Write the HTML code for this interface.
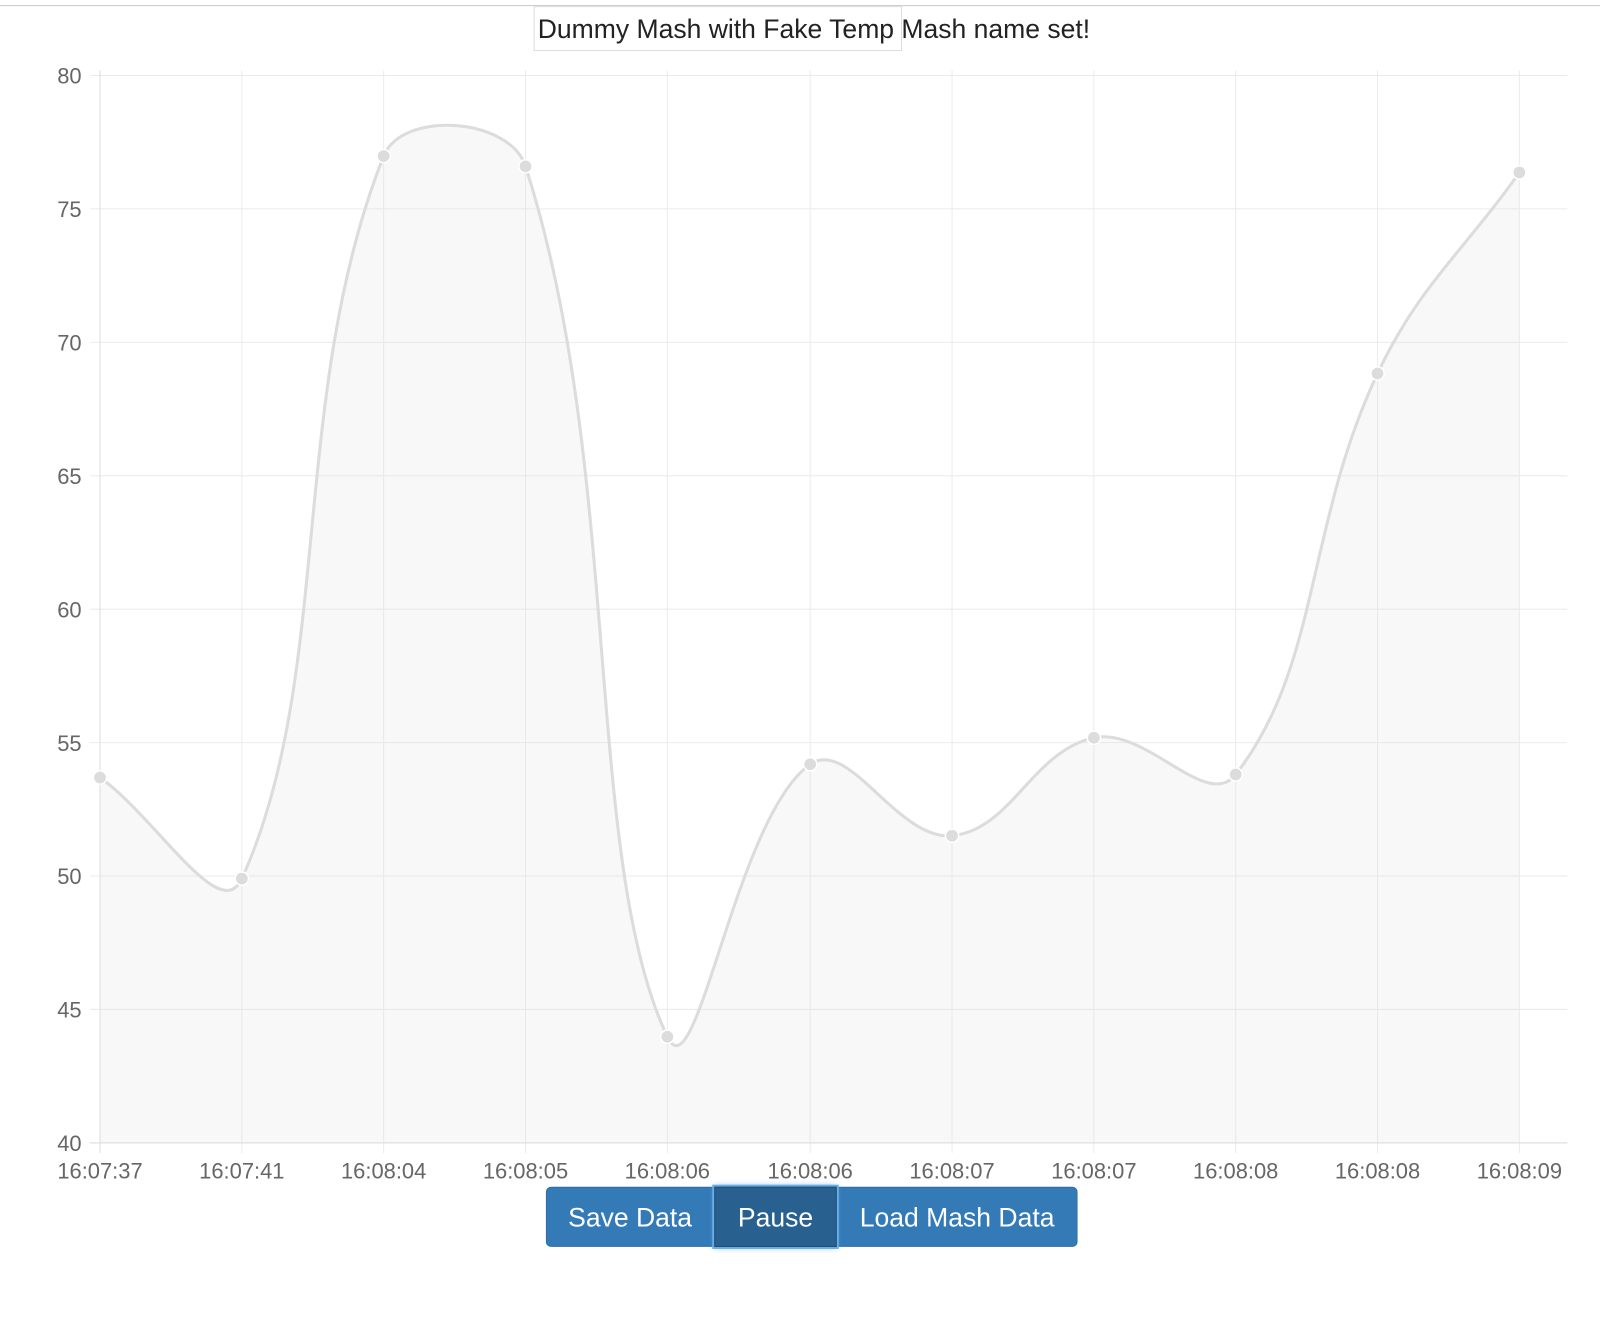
<!DOCTYPE html>
<html><head><meta charset="utf-8"><style>
html,body{margin:0;padding:0;background:#fff;width:1600px;height:1330px;overflow:hidden;font-family:"Liberation Sans",Arial,sans-serif}
#wrap{position:absolute;left:0;top:0;width:1568px;height:1304px;transform:scale(1.0204);transform-origin:0 0}
#topline{position:absolute;left:0;top:0;width:1568px;height:5px;background:#fff;border-bottom:1px solid #c8c8c8}
#title{position:absolute;left:523px;top:6px;height:44px;line-height:44px;font-size:26px;color:#222;white-space:nowrap}
#title .box{position:absolute;left:0;top:0;width:359px;height:42px;border:1px solid #ddd}
#title span.t{position:relative;padding-left:4px}
svg{position:absolute;left:0;top:0}
.btns{position:absolute;left:535px;top:1163px;height:59px;display:flex}
.btn{height:59px;line-height:59px;color:#fff;font-size:26px;background:#337ab7;border:1px solid #2e6da4;box-sizing:border-box;text-align:center}
.b1{width:165px;border-radius:5px 0 0 5px}
.b2{width:120px;background:#286090;border-color:#204d74;box-shadow:0 0 0 2px #66afe9,0 0 6px #66afe9;position:relative;z-index:2}
.b3{width:236px;border-radius:0 5px 5px 0}
</style></head><body>
<div id="wrap">
<div id="topline"></div>
<div id="title"><div class="box"></div><span class="t">Dummy Mash with Fake Temp Mash name set!</span></div>
<svg id="c" width="1568" height="1304" xmlns="http://www.w3.org/2000/svg"></svg>
<div class="btns"><div class="btn b1">Save Data</div><div class="btn b2">Pause</div><div class="btn b3">Load Mash Data</div></div>
</div>
<script>
(function(){
var xs=[98,237,376,515,654,794,933,1072,1211,1350,1489];
var ys=[762,861,153,163,1016,749,819,723,759,366,169];
var labels=["16:07:37","16:07:41","16:08:04","16:08:05","16:08:06","16:08:06","16:08:07","16:08:07","16:08:08","16:08:08","16:08:09"];
var s='';
var yTop=74,yBot=1120;
for(var i=0;i<=8;i++){var y=yTop+i*(yBot-yTop)/8;s+='<line x1="88" x2="1536" y1="'+y+'" y2="'+y+'" stroke="#ebebeb" stroke-width="1"/>';
s+='<text x="80" y="'+(y+8)+'" text-anchor="end" font-size="21.5" fill="#666" font-family="Liberation Sans,sans-serif">'+(80-i*5)+'</text>';}
for(var i=0;i<xs.length;i++){s+='<line x1="'+xs[i]+'" x2="'+xs[i]+'" y1="'+(yTop-5)+'" y2="1130" stroke="'+(i==0?'#dcdcdc':'#ebebeb')+'" stroke-width="1"/>';
s+='<text x="'+xs[i]+'" y="1155" text-anchor="middle" font-size="21.5" fill="#666" font-family="Liberation Sans,sans-serif">'+labels[i]+'</text>';}
s+='<line x1="88" x2="1536" y1="1120" y2="1120" stroke="#dcdcdc"/>';
var t=0.4,cp=[];
for(var i=0;i<xs.length;i++){
 var p0=i>0?[xs[i-1],ys[i-1]]:[xs[i],ys[i]],p1=[xs[i],ys[i]],p2=i<xs.length-1?[xs[i+1],ys[i+1]]:[xs[i],ys[i]];
 var d01=Math.hypot(p1[0]-p0[0],p1[1]-p0[1]),d12=Math.hypot(p2[0]-p1[0],p2[1]-p1[1]);
 var fa=d01+d12?t*d01/(d01+d12):0,fb=d01+d12?t*d12/(d01+d12):0;
 cp.push({ix:p1[0]-fa*(p2[0]-p0[0]),iy:p1[1]-fa*(p2[1]-p0[1]),ox:p1[0]+fb*(p2[0]-p0[0]),oy:p1[1]+fb*(p2[1]-p0[1])});
}
var d='M'+xs[0]+','+ys[0];
for(var i=1;i<xs.length;i++){d+=' C'+cp[i-1].ox+','+cp[i-1].oy+' '+cp[i].ix+','+cp[i].iy+' '+xs[i]+','+ys[i];}
s+='<path d="'+d+' L1489,1120 L98,1120 Z" fill="rgba(220,220,220,0.2)"/>';
s+='<path d="'+d+'" fill="none" stroke="#dcdcdc" stroke-width="3"/>';
for(var i=0;i<xs.length;i++){s+='<circle cx="'+xs[i]+'" cy="'+ys[i]+'" r="6.5" fill="#dcdcdc" stroke="#fff" stroke-width="1.5"/>';}
document.getElementById('c').innerHTML=s;
})();
</script>
</body></html>
